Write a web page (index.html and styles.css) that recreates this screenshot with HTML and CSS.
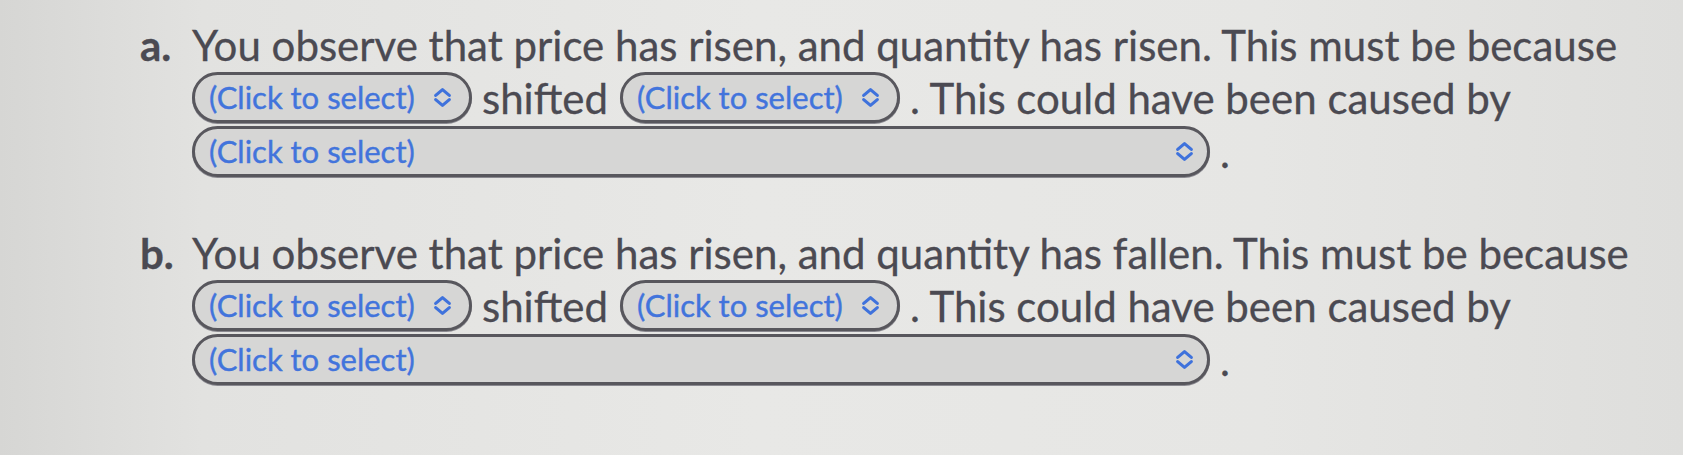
FILE: index.html
```html
<!DOCTYPE html>
<html>
<head>
<meta charset="utf-8">
<link rel="stylesheet" href="styles.css">
</head>
<body>
<div class="page">
  <div class="item item-a">
    <div class="label">a.</div>
    <div class="content">
      <div class="text-line">You observe that price has risen, and quantity has risen. This must be because</div>
      <div class="row">
        <span class="select small"><span class="sel-text">(Click to select)</span><svg class="chev" viewBox="0 0 18 20"><path d="M2.5 8 L9 2.5 L15.5 8 M2.5 12 L9 17.5 L15.5 12"/></svg></span>
        <span class="word">shifted</span>
        <span class="select small"><span class="sel-text">(Click to select)</span><svg class="chev" viewBox="0 0 18 20"><path d="M2.5 8 L9 2.5 L15.5 8 M2.5 12 L9 17.5 L15.5 12"/></svg></span>
        <span class="word">. This could have been caused by</span>
      </div>
      <div class="row">
        <span class="select wide"><span class="sel-text">(Click to select)</span><svg class="chev" viewBox="0 0 18 20"><path d="M2.5 8 L9 2.5 L15.5 8 M2.5 12 L9 17.5 L15.5 12"/></svg></span>
        <span class="word">.</span>
      </div>
    </div>
  </div>
  <div class="item item-b">
    <div class="label">b.</div>
    <div class="content">
      <div class="text-line">You observe that price has risen, and quantity has fallen. This must be because</div>
      <div class="row">
        <span class="select small"><span class="sel-text">(Click to select)</span><svg class="chev" viewBox="0 0 18 20"><path d="M2.5 8 L9 2.5 L15.5 8 M2.5 12 L9 17.5 L15.5 12"/></svg></span>
        <span class="word">shifted</span>
        <span class="select small"><span class="sel-text">(Click to select)</span><svg class="chev" viewBox="0 0 18 20"><path d="M2.5 8 L9 2.5 L15.5 8 M2.5 12 L9 17.5 L15.5 12"/></svg></span>
        <span class="word">. This could have been caused by</span>
      </div>
      <div class="row">
        <span class="select wide"><span class="sel-text">(Click to select)</span><svg class="chev" viewBox="0 0 18 20"><path d="M2.5 8 L9 2.5 L15.5 8 M2.5 12 L9 17.5 L15.5 12"/></svg></span>
        <span class="word">.</span>
      </div>
    </div>
  </div>
</div>
</body>
</html>
```

FILE: styles.css
```css
html, body {
  margin: 0;
  padding: 0;
}
body {
  width: 1683px;
  height: 455px;
  overflow: hidden;
  background: linear-gradient(90deg, #d6d6d4 0%, #e2e2e0 12%, #e8e8e6 45%, #e6e6e4 75%, #dededc 100%);
  font-family: Lato, "Liberation Sans", sans-serif;
  color: #4b4a52;
  -webkit-text-stroke: 0.3px #4b4a52;
}
.page {
  padding: 20px 0 0 140px;
}
.item {
  display: flex;
}
.item-b {
  margin-top: 51px;
}
.label {
  width: 52px;
  font-size: 42px;
  line-height: 50px;
  font-weight: 700;
}
.content {
  display: flex;
  flex-direction: column;
}
.text-line {
  font-size: 42px;
  line-height: 50px;
  white-space: nowrap;
}
.row {
  display: flex;
  align-items: center;
  margin-top: 2px;
  white-space: nowrap;
}
.row + .row {
  margin-top: 3px;
}
.word {
  font-size: 42px;
  line-height: 50px;
  margin-left: 11px;
}
.select + .word {
  margin-left: 10px;
}
.word + .select {
  margin-left: 12px;
}
.select {
  display: flex;
  align-items: center;
  justify-content: space-between;
  box-sizing: border-box;
  height: 51px;
  border: 3px solid #58575d;
  border-radius: 26px;
  background: #d6d6d5;
  box-shadow: 0 1px 0 #8a8990;
  padding: 0 17px 0 14px;
}
.select.small {
  width: 280px;
}
.select.wide {
  width: 1018px;
  padding-right: 13px;
}
.sel-text {
  font-size: 31px;
  color: #4274dc;
  -webkit-text-stroke: 0.4px #4274dc;
  line-height: 1;
}
.chev {
  width: 19px;
  height: 21px;
  flex: none;
}
.chev path {
  fill: none;
  stroke: #3f72dc;
  stroke-width: 3;
  stroke-linecap: round;
  stroke-linejoin: round;
}
```
